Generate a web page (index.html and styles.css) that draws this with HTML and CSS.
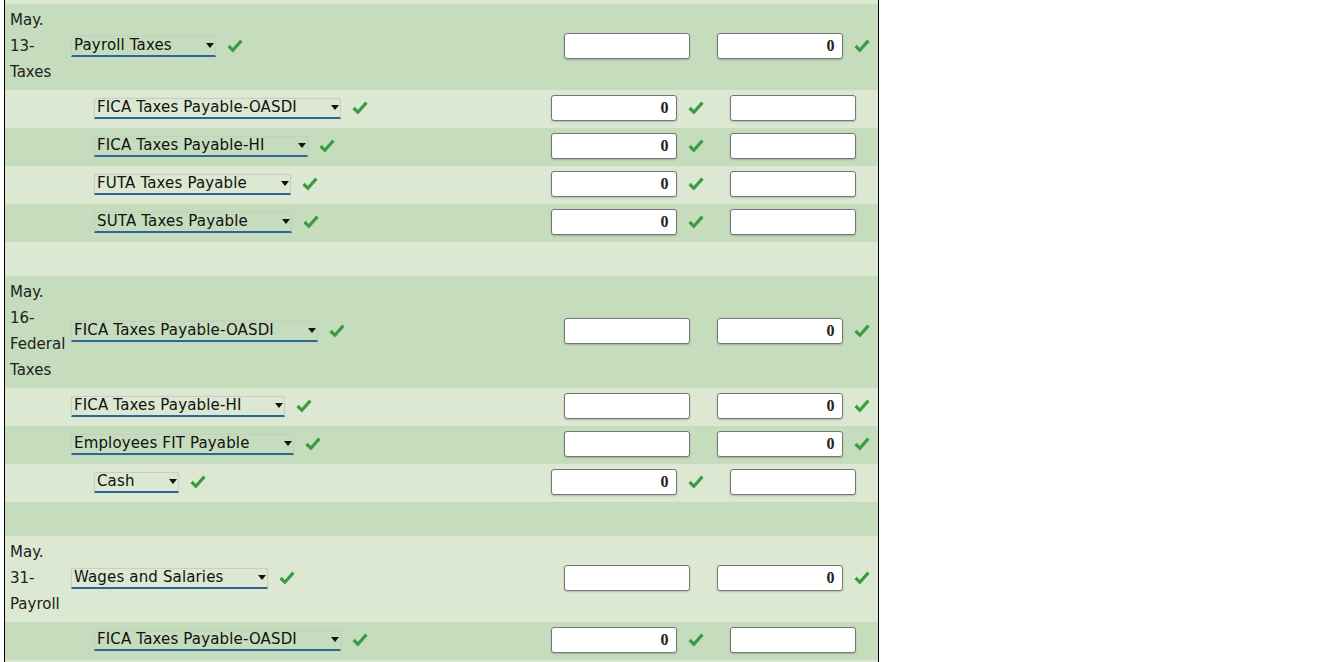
FILE: index.html
```html
<!DOCTYPE html>
<html>
<head>
<meta charset="utf-8">
<link rel="stylesheet" href="styles.css">
</head>
<body>
<div class="sheet">
  <div class="strip light"></div>

  <div class="row dark head">
    <div class="date"><div>May.</div><div>13-</div><div>Taxes</div></div>
    <div class="acct"><span class="sel"><span class="txt">Payroll Taxes</span><span class="caret"></span></span><svg class="ok" viewBox="0 0 15 13"><path d="M1.5 6.5 L5.5 10.5 L13.5 1.5"/></svg></div>
    <div class="amt"><input class="inp" type="text" value="" readonly></div>
    <div class="amt"><input class="inp" type="text" value="0" readonly><svg class="ok" viewBox="0 0 15 13"><path d="M1.5 6.5 L5.5 10.5 L13.5 1.5"/></svg></div>
  </div>

  <div class="row light entry">
    <div class="date"></div>
    <div class="acct indent"><span class="sel"><span class="txt">FICA Taxes Payable-OASDI</span><span class="caret"></span></span><svg class="ok" viewBox="0 0 15 13"><path d="M1.5 6.5 L5.5 10.5 L13.5 1.5"/></svg></div>
    <div class="amt"><input class="inp" type="text" value="0" readonly><svg class="ok" viewBox="0 0 15 13"><path d="M1.5 6.5 L5.5 10.5 L13.5 1.5"/></svg></div>
    <div class="amt"><input class="inp" type="text" value="" readonly></div>
  </div>

  <div class="row dark entry">
    <div class="date"></div>
    <div class="acct indent"><span class="sel"><span class="txt">FICA Taxes Payable-HI</span><span class="caret"></span></span><svg class="ok" viewBox="0 0 15 13"><path d="M1.5 6.5 L5.5 10.5 L13.5 1.5"/></svg></div>
    <div class="amt"><input class="inp" type="text" value="0" readonly><svg class="ok" viewBox="0 0 15 13"><path d="M1.5 6.5 L5.5 10.5 L13.5 1.5"/></svg></div>
    <div class="amt"><input class="inp" type="text" value="" readonly></div>
  </div>

  <div class="row light entry">
    <div class="date"></div>
    <div class="acct indent"><span class="sel"><span class="txt">FUTA Taxes Payable</span><span class="caret"></span></span><svg class="ok" viewBox="0 0 15 13"><path d="M1.5 6.5 L5.5 10.5 L13.5 1.5"/></svg></div>
    <div class="amt"><input class="inp" type="text" value="0" readonly><svg class="ok" viewBox="0 0 15 13"><path d="M1.5 6.5 L5.5 10.5 L13.5 1.5"/></svg></div>
    <div class="amt"><input class="inp" type="text" value="" readonly></div>
  </div>

  <div class="row dark entry">
    <div class="date"></div>
    <div class="acct indent"><span class="sel"><span class="txt">SUTA Taxes Payable</span><span class="caret"></span></span><svg class="ok" viewBox="0 0 15 13"><path d="M1.5 6.5 L5.5 10.5 L13.5 1.5"/></svg></div>
    <div class="amt"><input class="inp" type="text" value="0" readonly><svg class="ok" viewBox="0 0 15 13"><path d="M1.5 6.5 L5.5 10.5 L13.5 1.5"/></svg></div>
    <div class="amt"><input class="inp" type="text" value="" readonly></div>
  </div>

  <div class="spacer light"></div>

  <div class="row dark head">
    <div class="date"><div>May.</div><div>16-</div><div>Federal</div><div>Taxes</div></div>
    <div class="acct"><span class="sel"><span class="txt">FICA Taxes Payable-OASDI</span><span class="caret"></span></span><svg class="ok" viewBox="0 0 15 13"><path d="M1.5 6.5 L5.5 10.5 L13.5 1.5"/></svg></div>
    <div class="amt"><input class="inp" type="text" value="" readonly></div>
    <div class="amt"><input class="inp" type="text" value="0" readonly><svg class="ok" viewBox="0 0 15 13"><path d="M1.5 6.5 L5.5 10.5 L13.5 1.5"/></svg></div>
  </div>

  <div class="row light entry">
    <div class="date"></div>
    <div class="acct"><span class="sel"><span class="txt">FICA Taxes Payable-HI</span><span class="caret"></span></span><svg class="ok" viewBox="0 0 15 13"><path d="M1.5 6.5 L5.5 10.5 L13.5 1.5"/></svg></div>
    <div class="amt"><input class="inp" type="text" value="" readonly></div>
    <div class="amt"><input class="inp" type="text" value="0" readonly><svg class="ok" viewBox="0 0 15 13"><path d="M1.5 6.5 L5.5 10.5 L13.5 1.5"/></svg></div>
  </div>

  <div class="row dark entry">
    <div class="date"></div>
    <div class="acct"><span class="sel"><span class="txt">Employees FIT Payable</span><span class="caret"></span></span><svg class="ok" viewBox="0 0 15 13"><path d="M1.5 6.5 L5.5 10.5 L13.5 1.5"/></svg></div>
    <div class="amt"><input class="inp" type="text" value="" readonly></div>
    <div class="amt"><input class="inp" type="text" value="0" readonly><svg class="ok" viewBox="0 0 15 13"><path d="M1.5 6.5 L5.5 10.5 L13.5 1.5"/></svg></div>
  </div>

  <div class="row light entry">
    <div class="date"></div>
    <div class="acct indent"><span class="sel"><span class="txt">Cash</span><span class="caret"></span></span><svg class="ok" viewBox="0 0 15 13"><path d="M1.5 6.5 L5.5 10.5 L13.5 1.5"/></svg></div>
    <div class="amt"><input class="inp" type="text" value="0" readonly><svg class="ok" viewBox="0 0 15 13"><path d="M1.5 6.5 L5.5 10.5 L13.5 1.5"/></svg></div>
    <div class="amt"><input class="inp" type="text" value="" readonly></div>
  </div>

  <div class="spacer dark"></div>

  <div class="row light head">
    <div class="date"><div>May.</div><div>31-</div><div>Payroll</div></div>
    <div class="acct"><span class="sel"><span class="txt">Wages and Salaries</span><span class="caret"></span></span><svg class="ok" viewBox="0 0 15 13"><path d="M1.5 6.5 L5.5 10.5 L13.5 1.5"/></svg></div>
    <div class="amt"><input class="inp" type="text" value="" readonly></div>
    <div class="amt"><input class="inp" type="text" value="0" readonly><svg class="ok" viewBox="0 0 15 13"><path d="M1.5 6.5 L5.5 10.5 L13.5 1.5"/></svg></div>
  </div>

  <div class="row dark entry">
    <div class="date"></div>
    <div class="acct indent"><span class="sel"><span class="txt">FICA Taxes Payable-OASDI</span><span class="caret"></span></span><svg class="ok" viewBox="0 0 15 13"><path d="M1.5 6.5 L5.5 10.5 L13.5 1.5"/></svg></div>
    <div class="amt"><input class="inp" type="text" value="0" readonly><svg class="ok" viewBox="0 0 15 13"><path d="M1.5 6.5 L5.5 10.5 L13.5 1.5"/></svg></div>
    <div class="amt"><input class="inp" type="text" value="" readonly></div>
  </div>

  <div class="spacer light"></div>
</div>
</body>
</html>
```

FILE: styles.css
```css
html, body {
  margin: 0;
  padding: 0;
  background: #ffffff;
}

body {
  font-family: "DejaVu Sans", Verdana, sans-serif;
  color: #222222;
}

.sheet {
  margin-left: 4px;
  width: 875px;
  box-sizing: border-box;
  border-left: 1px solid #000000;
  border-right: 1px solid #000000;
}

.dark {
  background: #c5dcbd;
}

.light {
  background: #dce8d1;
}

.strip {
  height: 4px;
}

.spacer {
  height: 34px;
}

.row {
  display: grid;
  grid-template-columns: 61px 1fr 166px 166px;
  align-items: center;
  padding-right: 2px;
}

.row.head {
  padding-top: 3px;
  padding-bottom: 5px;
}

.row.entry {
  padding-top: 5px;
  padding-bottom: 7px;
}

.date {
  padding-left: 5px;
  font-size: 15px;
  line-height: 26px;
  color: #222222;
  white-space: nowrap;
}

.acct {
  padding-left: 5px;
  display: flex;
  align-items: center;
  gap: 11px;
}

.acct.indent {
  padding-left: 28px;
}

.sel {
  display: inline-flex;
  align-items: center;
  height: 21px;
  box-sizing: border-box;
  padding: 0 1px 0 2px;
  border: 1px solid #c9cec4;
  border-bottom: 2px solid #2d6797;
  border-radius: 3px 3px 0 0;
  box-shadow: 0 0 1px rgba(0, 0, 0, 0.15);
  font-size: 15px;
  line-height: 17px;
  letter-spacing: 0.15px;
  color: #111111;
  white-space: nowrap;
}

.caret {
  width: 0;
  height: 0;
  margin-left: 34px;
  border-left: 4px solid transparent;
  border-right: 4px solid transparent;
  border-top: 5px solid #111111;
}

.ok {
  width: 16px;
  height: 14px;
  flex: none;
}

.ok path {
  fill: none;
  stroke: #3b9b41;
  stroke-width: 3;
}

.amt {
  display: flex;
  justify-content: center;
  align-items: center;
  gap: 11px;
}

.inp {
  width: 126px;
  height: 26px;
  box-sizing: border-box;
  margin: 0;
  padding: 0 7px 0 4px;
  border: 1px solid #767676;
  border-radius: 3px;
  background: #ffffff;
  box-shadow: 0 1px 2px rgba(0, 0, 0, 0.2);
  text-align: right;
  font-family: "Liberation Serif", "Times New Roman", serif;
  font-weight: bold;
  font-size: 16px;
  color: #222222;
  outline: none;
}
```
